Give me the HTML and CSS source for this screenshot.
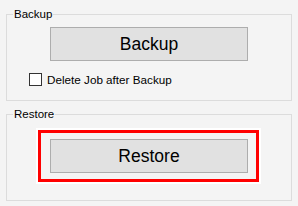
FILE: index.html
```
<!DOCTYPE html>
<html lang="en">
<head>
  <meta charset="UTF-8">
  <title>Backup / Restore</title>
  <link rel="stylesheet" href="styles.css">
</head>
<body>
  <fieldset class="group group-backup">
    <legend>Backup</legend>
    <button class="big-button backup-button">Backup</button>
    <label class="check-row">
      <input type="checkbox" class="check-box">
      <span>Delete Job after Backup</span>
    </label>
  </fieldset>

  <fieldset class="group group-restore">
    <legend>Restore</legend>
    <div class="highlight">
      <button class="big-button">Restore</button>
    </div>
  </fieldset>
</body>
</html>
```

FILE: styles.css
```
* {
  box-sizing: border-box;
}
body {
  margin: 0;
  padding: 7px 6px 0 6px;
  width: 298px;
  height: 206px;
  background-color: #f4f4f4;
  font-family: "Liberation Sans", Arial, sans-serif;
  color: #000;
  overflow: hidden;
}
.group {
  margin: 0;
  padding: 0;
  width: 286px;
  border: 1px solid #dcdcdc;
  min-inline-size: 0;
}
.group legend {
  margin-left: 6px;
  padding: 0 1px;
  font-size: 11.5px;
  line-height: 14px;
}
.group-backup {
  padding-bottom: 14px;
}
.group-restore {
  margin-top: 6px;
  padding-bottom: 18px;
}
.big-button {
  display: block;
  width: 198px;
  height: 34px;
  padding: 0;
  background-color: #e1e1e1;
  border: 1px solid #adadad;
  border-radius: 0;
  font-family: "Liberation Sans", Arial, sans-serif;
  font-size: 17.5px;
  color: #000;
  line-height: 32px;
}
.backup-button {
  margin: 6px 0 0 43px;
}
.check-row {
  display: flex;
  align-items: center;
  margin: 12px 0 0 22px;
  height: 13px;
  font-size: 11.7px;
}
.check-box {
  appearance: none;
  -webkit-appearance: none;
  width: 13px;
  height: 13px;
  margin: 0 5px 0 0;
  border: 1px solid #333;
  background-color: #fff;
}
.highlight {
  width: 221px;
  margin: 9px 0 0 31px;
  padding: 6px 8px 6px 9px;
  border: 3px solid #ff0000;
  outline: 2px solid #fff;
}
```
